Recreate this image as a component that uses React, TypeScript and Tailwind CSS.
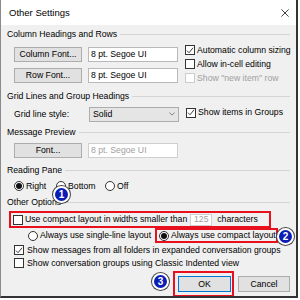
import React from 'react';

const Check: React.FC<{ checked?: boolean; disabled?: boolean }> = ({ checked, disabled }) => (
  <span
    className={`w-[10px] h-[10px] border bg-white flex items-center justify-center shrink-0 ${
      disabled ? 'border-[#cccccc]' : 'border-[#333333]'
    }`}
  >
    {checked && (
      <svg viewBox="0 0 10 10" className="w-[9px] h-[9px]">
        <path d="M1.2 5.2 L3.8 7.8 L8.8 1.6" fill="none" stroke="#222222" strokeWidth="1.1" />
      </svg>
    )}
  </span>
);

const Radio: React.FC<{ checked?: boolean }> = ({ checked }) => (
  <span className="w-[10px] h-[10px] rounded-full border border-[#333333] bg-white flex items-center justify-center shrink-0">
    {checked && <span className="w-[6px] h-[6px] rounded-full bg-[#111111]" />}
  </span>
);

const Header: React.FC<{ label: string; h: string }> = ({ label, h }) => (
  <div className={`flex items-center pr-[6px] ${h}`}>
    <span>{label}</span>
    <span className="flex-1 h-px bg-[#d5d5d5] ml-[3px]" />
  </div>
);

const Btn: React.FC<{ label: string }> = ({ label }) => (
  <div className="w-[68px] h-[15px] bg-[#e1e1e1] border border-[#adadad] flex items-center justify-center">
    {label}
  </div>
);

const Badge: React.FC<{ n: string; className: string }> = ({ n, className }) => (
  <div
    className={`absolute w-[17px] h-[17px] rounded-full bg-[#0a1db5] border-2 border-white ring-1 ring-[#444444] text-white font-bold text-[10px] flex items-center justify-center ${className}`}
  >
    {n}
  </div>
);

export default function App() {
  return (
    <div className="relative w-[298px] h-[298px] bg-[#f0f0f0] border-l border-l-[#8a8a8a] border-r-2 border-b-2 border-r-[#333333] border-b-[#333333] font-['Liberation_Sans',Arial,sans-serif] text-[8.7px] text-black leading-none whitespace-nowrap overflow-hidden">
      {/* title bar */}
      <div className="h-[25px] bg-white flex items-center justify-between pl-[8px] pr-[7px]">
        <span className="text-[9.5px]">Other Settings</span>
        <svg viewBox="0 0 10 10" className="w-[8px] h-[8px]">
          <path d="M0.5 0.5 L9.5 9.5 M9.5 0.5 L0.5 9.5" stroke="#111111" strokeWidth="1" />
        </svg>
      </div>

      <div className="pl-[6px]">
        <Header label="Column Headings and Rows" h="h-[18px]" />
        <div className="flex h-[44px]">
          <div className="flex flex-col gap-[6px] pt-[4px] pl-[7px]">
            <div className="flex gap-[6px]">
              <Btn label="Column Font..." />
              <div className="w-[90px] h-[15px] bg-white border border-[#b9b9b9] flex items-center px-[2px]">8 pt. Segoe UI</div>
            </div>
            <div className="flex gap-[6px]">
              <Btn label="Row Font..." />
              <div className="w-[90px] h-[15px] bg-white border border-[#b9b9b9] flex items-center px-[2px]">8 pt. Segoe UI</div>
            </div>
          </div>
          <div className="flex flex-col ml-[7px]">
            <div className="h-[14px] flex items-center gap-[2px]"><Check checked />Automatic column sizing</div>
            <div className="h-[14px] flex items-center gap-[2px]"><Check />Allow in-cell editing</div>
            <div className="h-[14px] flex items-center gap-[2px] text-[#a0a0a0]"><Check disabled />Show "new item" row</div>
          </div>
        </div>

        <Header label="Grid Lines and Group Headings" h="h-[18px]" />
        <div className="h-[18px] flex items-center pl-[7px]">
          <span className="w-[75px]">Grid line style:</span>
          <div className="w-[90px] h-[15px] bg-[#e5e5e5] border border-[#adadad] flex items-center justify-between px-[3px]">
            <span>Solid</span>
            <svg viewBox="0 0 8 5" className="w-[6px] h-[4px]">
              <path d="M0.5 0.5 L4 4 L7.5 0.5" fill="none" stroke="#555555" strokeWidth="0.9" />
            </svg>
          </div>
          <div className="flex items-center gap-[2px] ml-[7px] -mt-[3px]"><Check checked />Show items in Groups</div>
        </div>

        <Header label="Message Preview" h="h-[18px]" />
        <div className="h-[20px] flex items-start pt-[2px] pl-[7px] gap-[6px]">
          <Btn label="Font..." />
          <div className="w-[90px] h-[15px] bg-white border border-[#cfcfcf] text-[#a0a0a0] flex items-center px-[2px]">8 pt. Segoe UI</div>
        </div>

        <Header label="Reading Pane" h="h-[18px]" />
        <div className="h-[14px] flex items-center pl-[7px]">
          <div className="w-[42px] flex items-center gap-[2px]"><Radio checked />Right</div>
          <div className="w-[49px] flex items-center gap-[2px]"><Radio />Bottom</div>
          <div className="flex items-center gap-[2px]"><Radio />Off</div>
        </div>

        <Header label="Other Options" h="h-[18px]" />
        <div className="w-[262px] h-[17px] ml-[2px] border-2 border-[#e8101c] flex items-center pl-[2px] gap-[2px]">
          <Check />
          <span>Use compact layout in widths smaller than</span>
          <div className="w-[22px] h-[12px] ml-[1px] bg-white border border-[#d0d0d0] text-[#a0a0a0] flex items-center justify-center">125</div>
          <span className="ml-[3px]">characters</span>
        </div>
        <div className="h-[15px] flex items-center">
          <div className="w-[148px] flex items-center gap-[2px] pl-[21px]"><Radio />Always use single-line layout</div>
          <div className="w-[123px] h-[15px] border-2 border-[#e8101c] flex items-center gap-[2px] pl-[2px]"><Radio checked />Always use compact layout</div>
        </div>
        <div className="h-[14px] flex items-center gap-[3px] pl-[7px]"><Check checked />Show messages from all folders in expanded conversation groups</div>
        <div className="h-[12px] flex items-center gap-[3px] pl-[7px]"><Check />Show conversation groups using Classic Indented view</div>

        <div className="flex pl-[166px] pt-[2px] gap-[4px]">
          <div className="w-[61px] h-[26px] border-2 border-[#e8101c] flex items-center pl-[3px]">
            <div className="w-[53px] h-[16px] bg-[#e1e1e1] border border-[#0078d7] flex items-center justify-center">OK</div>
          </div>
          <div className="w-[52px] h-[16px] mt-[5px] bg-[#e1e1e1] border border-[#adadad] flex items-center justify-center">Cancel</div>
        </div>
      </div>

      <Badge n="1" className="left-[52px] top-[186px]" />
      <Badge n="2" className="left-[276px] top-[228px]" />
      <Badge n="3" className="left-[151px] top-[273px]" />
    </div>
  );
}
